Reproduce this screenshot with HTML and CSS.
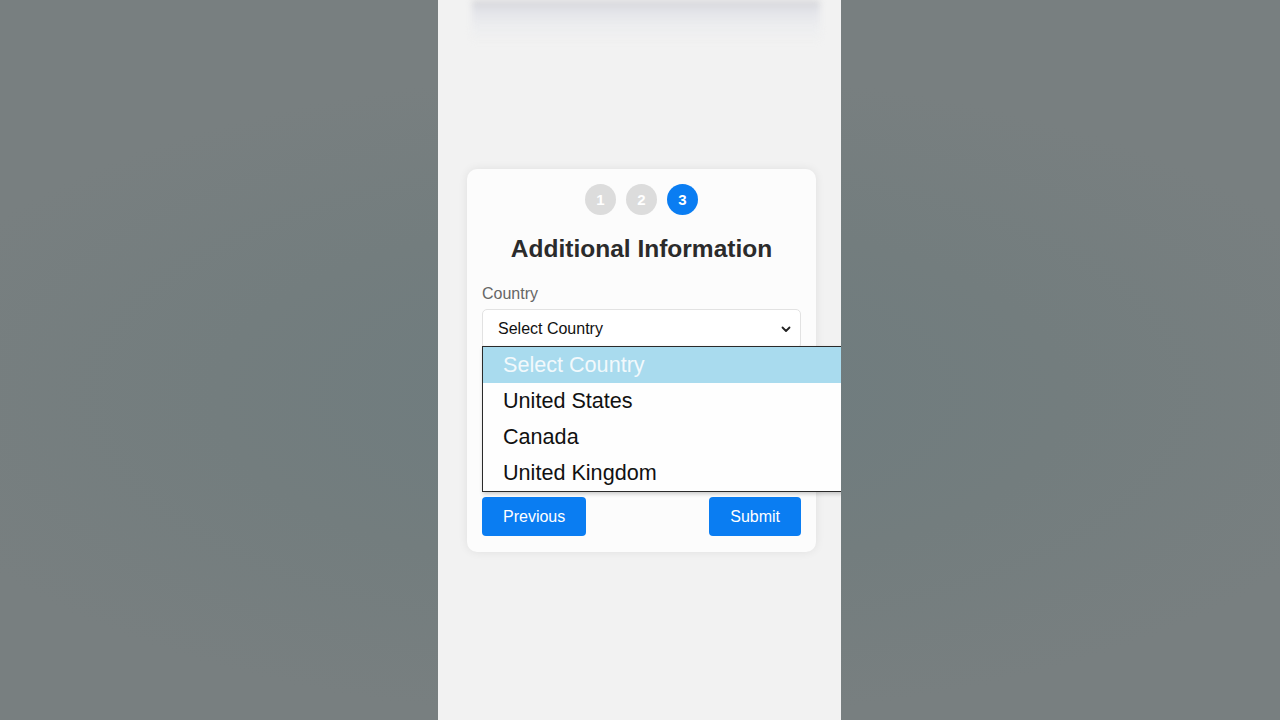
FILE: index.html
```html
<!DOCTYPE html>
<html lang="en">
<head>
<meta charset="utf-8">
<title>Additional Information</title>
<link rel="stylesheet" href="styles.css">
</head>
<body>
<div class="stage">
  <div class="strip">
    <div class="top-shade"></div>
    <div class="card">
      <div class="steps">
        <span class="step">1</span>
        <span class="step">2</span>
        <span class="step active">3</span>
      </div>
      <h2 class="title">Additional Information</h2>
      <div class="field">
        <label class="label">Country</label>
        <div class="select">
          <span>Select Country</span>
          <svg class="chev" width="10" height="7" viewBox="0 0 10 7"><path d="M1.5 1.5 L5 5 L8.5 1.5" fill="none" stroke="#222" stroke-width="1.8" stroke-linecap="round" stroke-linejoin="round"/></svg>
        </div>
        <ul class="dropdown">
          <li class="opt selected">Select Country</li>
          <li class="opt">United States</li>
          <li class="opt">Canada</li>
          <li class="opt">United Kingdom</li>
        </ul>
      </div>
      <div class="actions">
        <button class="btn">Previous</button>
        <button class="btn">Submit</button>
      </div>
    </div>
  </div>
</div>
</body>
</html>
```
FILE: styles.css
```css
html, body {
  margin: 0;
  padding: 0;
  height: 100%;
}
body {
  background: #767e7f;
  background-image: radial-gradient(ellipse 60% 45% at 50% 55%, #6e7c7f 0%, #737d7e 55%, #787f80 100%);
  font-family: "Liberation Sans", Arial, sans-serif;
  overflow: hidden;
}
.stage {
  height: 720px;
  display: flex;
}
.strip {
  margin-left: 438px;
  width: 403px;
  height: 720px;
  background: #f2f2f2;
  display: flex;
  flex-direction: column;
  overflow: hidden;
}
.top-shade {
  margin-left: 34px;
  width: 348px;
  height: 40px;
  flex: none;
  background: linear-gradient(to bottom, #d6d6dc 0%, #e4e5ea 25%, #ecedef 60%, rgba(242,242,242,0) 100%);
  border-top: 2px solid #d8d8d8;
  filter: blur(3px);
}
.card {
  margin-top: 127px;
  margin-left: 29px;
  width: 349px;
  box-sizing: border-box;
  padding: 15px 15px 16px;
  background: #fcfcfc;
  border-radius: 10px;
  box-shadow: 0 0 10px rgba(0,0,0,0.08);
  display: flex;
  flex-direction: column;
}
.steps {
  display: flex;
  justify-content: center;
  gap: 10px;
}
.step {
  width: 31px;
  height: 31px;
  border-radius: 50%;
  background: #dcdcdc;
  color: #fff;
  font-weight: bold;
  font-size: 15px;
  display: flex;
  align-items: center;
  justify-content: center;
}
.step.active {
  background: #0a7df2;
}
.title {
  margin: 20px 0 0;
  font-size: 24.5px;
  font-weight: bold;
  color: #2b2b2b;
  text-align: center;
  line-height: 27.6px;
}
.field {
  margin-top: 22px;
  display: flex;
  flex-direction: column;
  position: relative;
}
.label {
  font-size: 16px;
  color: #666;
  line-height: 18.4px;
}
.select {
  margin-top: 6px;
  height: 40px;
  box-sizing: border-box;
  border: 1px solid #e2e2e2;
  border-radius: 5px;
  background: #fff;
  padding: 0 9px 0 15px;
  display: flex;
  align-items: center;
  justify-content: space-between;
  font-size: 16px;
  color: #111;
}
.chev {
  display: block;
}
.dropdown {
  position: absolute;
  left: 0;
  top: 61px;
  width: 400px;
  margin: 0;
  padding: 0;
  list-style: none;
  background: #fefefe;
  border: 1px solid #2a2a2a;
  box-shadow: 1px 2px 4px rgba(0,0,0,0.2);
}
.opt {
  height: 36px;
  display: flex;
  align-items: center;
  padding-left: 20px;
  font-size: 21.6px;
  color: #111;
}
.opt.selected {
  background: #a9dbee;
  color: #f2f9fc;
}
.actions {
  margin-top: 148px;
  display: flex;
  justify-content: space-between;
}
.btn {
  font-family: "Liberation Sans", Arial, sans-serif;
  font-size: 16px;
  color: #fff;
  background: #0a7df2;
  border: none;
  border-radius: 4px;
  padding: 10px 21px;
  height: 39px;
  line-height: 19px;
}
```
